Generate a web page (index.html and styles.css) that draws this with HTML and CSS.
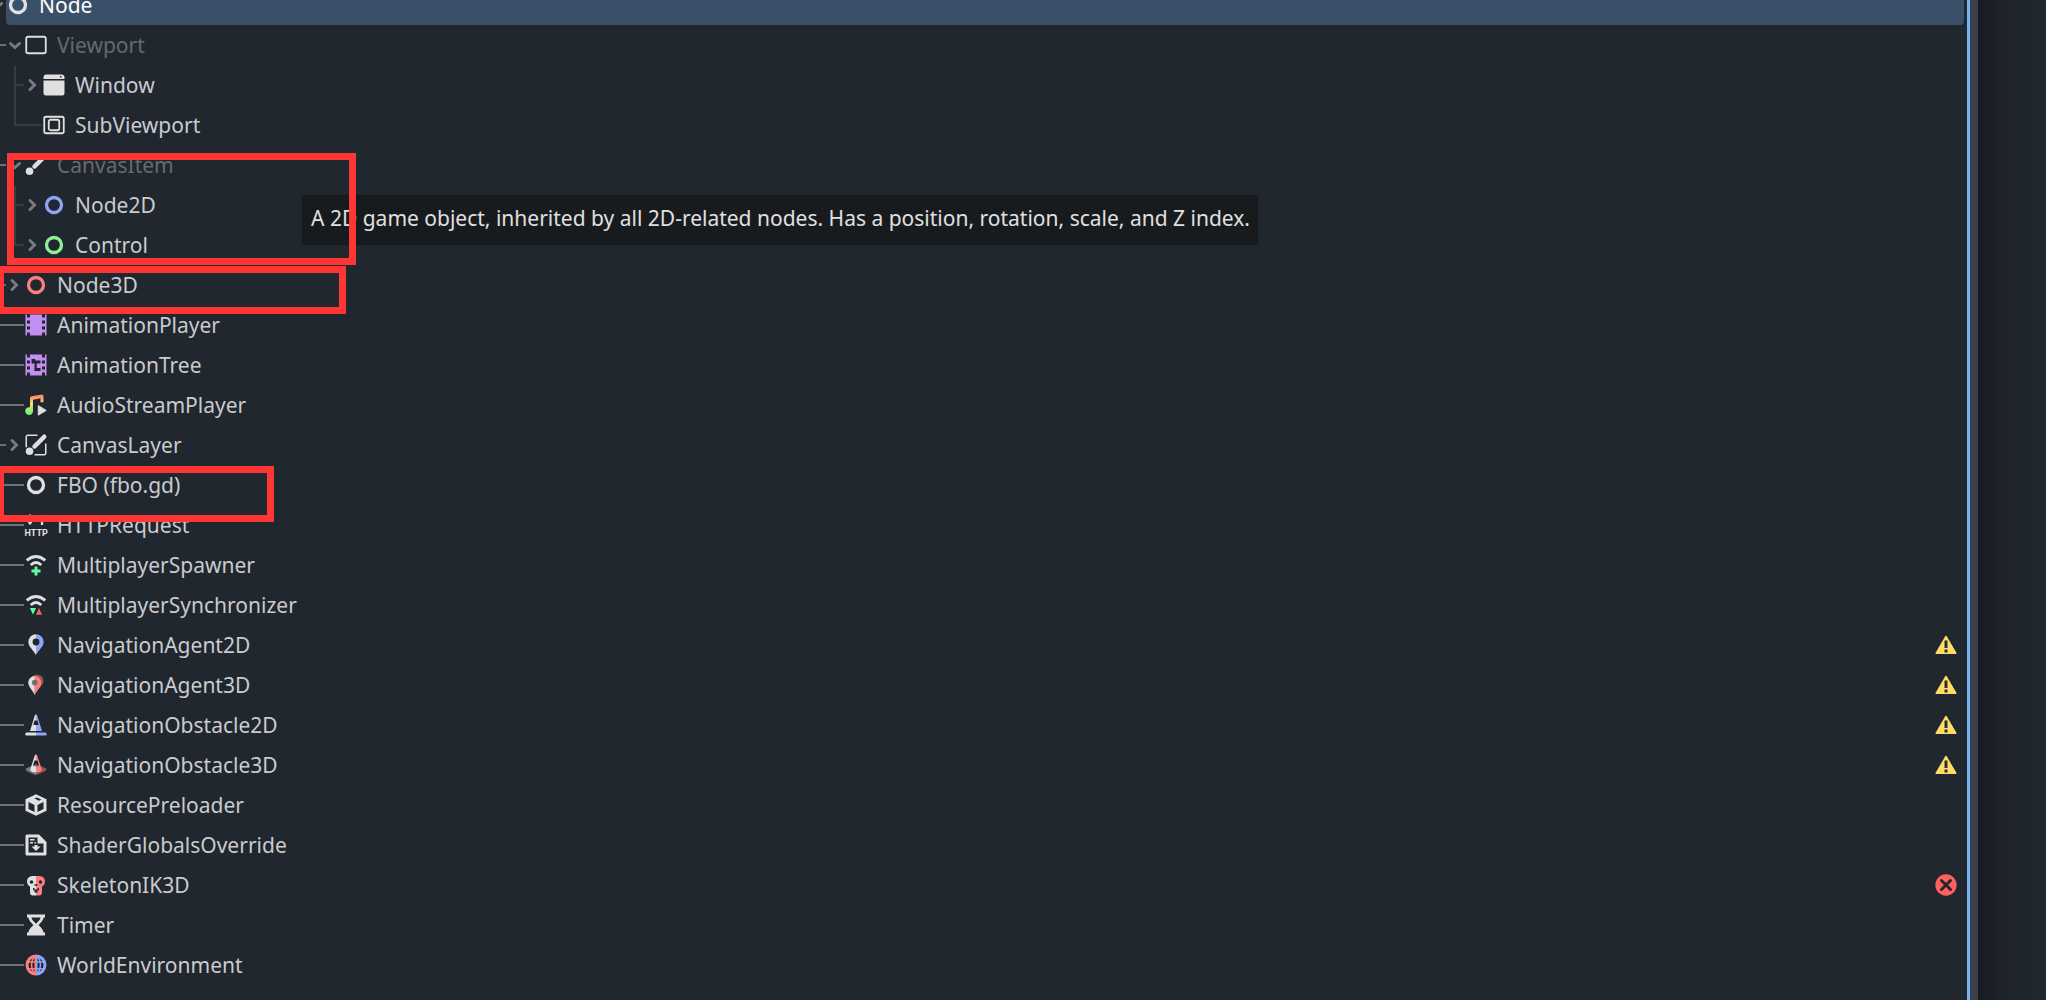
FILE: index.html
```html
<!DOCTYPE html>
<html lang="en">
<head>
  <meta charset="UTF-8">
  <meta name="viewport" content="width=device-width, initial-scale=1.0">
  <title>Create New Node</title>
  <link rel="stylesheet" href="styles.css">
</head>
<body>
  <svg class="sprite" aria-hidden="true">
    <defs>
      <linearGradient id="note" x1="0" y1="0" x2="0" y2="1">
        <stop offset="0" stop-color="#ff7a6b"/>
        <stop offset=".45" stop-color="#ffdc66"/>
        <stop offset=".9" stop-color="#6df77a"/>
      </linearGradient>
    </defs>
    <symbol id="down" viewBox="0 0 18 18"><path d="M4.500 7.500L9 11.500l4.500-4" fill="none" stroke="#777b81" stroke-width="3" stroke-linecap="round"/></symbol>
    <symbol id="right" viewBox="0 0 18 18"><path d="M6 4.500L10.500 9 6 13.500" fill="none" stroke="#777b81" stroke-width="3" stroke-linecap="round"/></symbol>
    <symbol id="ring" viewBox="0 0 16 16"><circle cx="8" cy="8" r="5" fill="none" stroke="currentColor" stroke-width="2.200"/></symbol>
    <symbol id="viewport" viewBox="0 0 16 16"><rect x="1.5" y="2.5" width="13" height="11" rx="1.2" fill="none" stroke="currentColor" stroke-width="1.200"/></symbol>
    <symbol id="window" viewBox="0 0 16 16" fill="currentColor">
      <path d="M3 1h10a2 2 0 0 1 2 2v1H1V3a2 2 0 0 1 2-2zm9 1v1h1V2zM1 5h14v8.5a1.5 1.5 0 0 1-1.5 1.5h-11A1.5 1.5 0 0 1 1 13.5z" fill-rule="evenodd"/>
    </symbol>
    <symbol id="subviewport" viewBox="0 0 16 16" fill="none" stroke="currentColor" stroke-width="1.200">
      <rect x="1.5" y="2.5" width="13" height="11" rx="1.2"/><rect x="4.5" y="4.5" width="7" height="7" rx="1.2"/>
    </symbol>
    <symbol id="brush" viewBox="0 0 16 16">
      <path d="M13.5 2.5L7 9" stroke="currentColor" stroke-width="3" stroke-linecap="round"/>
      <circle cx="3.7" cy="12.2" r="2.5" fill="currentColor"/>
    </symbol>
    <symbol id="layer" viewBox="0 0 16 16">
      <path d="M1.500 9.500v-7a1 1 0 0 1 1-1H9M14.500 7v6.500a1 1 0 0 1-1 1H7" fill="none" stroke="currentColor"/>
      <path d="M13.500 2.500L7 9" stroke="currentColor" stroke-width="3" stroke-linecap="round"/>
      <circle cx="3.700" cy="12.200" r="2.500" fill="currentColor"/>
    </symbol>
    <symbol id="film" viewBox="0 0 16 16">
      <path d="M1 1v14h1v-2h2v2h8v-2h2v2h1V1h-1v2h-2V1H4v2H2V1zm1 4h2v2H2zm10 0h2v2h-2zM2 9h2v2H2zm10 0h2v2h-2z" fill="#c38ef1" fill-rule="evenodd"/>
    </symbol>
    <symbol id="filmtree" viewBox="0 0 16 16">
      <path d="M1 1v14h1v-2h2v2h8v-2h2v2h1V1h-1v2h-2V1H4v2H2V1zm1 4h2v2H2zm10 0h2v2h-2zM2 9h2v2H2zm10 0h2v2h-2zM5 4h2.500v1H11v2H8.500v3H11v2H7V7H5z" fill="#c38ef1" fill-rule="evenodd"/>
    </symbol>
    <symbol id="audio" viewBox="0 0 16 16">
      <path d="M4 3.300Q4 2.500 5 2.200L12 1a1 1 0 0 1 1 1v4.200h-2V3.500L6 4.500V12a2.600 2.600 0 1 1-2-2.500z" fill="url(#note)"/>
      <path d="M9.500 8.300v6.500l5.300-3.200z" fill="#e0e0e0" stroke="#e0e0e0" stroke-linejoin="round" stroke-width=".6"/>
    </symbol>
    <symbol id="http" viewBox="0 0 16 16">
      <path d="M4 1v6.500M12 8V2" fill="none" stroke="#e0e0e0" stroke-width="1.500"/>
      <path d="M1.500 5h5L4 8zM9.500 4h5L12 1z" fill="#e0e0e0"/>
      <text x=".4" y="15" class="http-text">HTTP</text>
    </symbol>
    <symbol id="waves" viewBox="0 0 16 16">
      <path d="M1.800 4.900Q8-.3 14.200 4.900M4.500 8Q8 4.800 11.500 8" fill="none" stroke="#e0e0e0" stroke-width="1.900"/>
    </symbol>
    <symbol id="spawner" viewBox="0 0 16 16">
      <use href="#waves"/><path d="M7 9h2v2h2v2H9v2H7v-2H5v-2h2z" fill="#5fff97"/>
    </symbol>
    <symbol id="sync" viewBox="0 0 16 16">
      <use href="#waves"/><path d="M4 10h4l-2 4.500z" fill="#5fff97"/><path d="M8 14.500h4L10 10z" fill="#ff5f5f"/>
    </symbol>
    <symbol id="agent2d" viewBox="0 0 16 16">
      <path d="M8 .8A5.100 5.100 0 0 0 2.900 6c0 3 3 5 5.100 8.600V8.300a2.300 2.300 0 0 1 0-4.600z" fill="#e0e0e0"/>
      <path d="M8 .8A5.100 5.100 0 0 1 13.100 6c0 3-3 5-5.100 8.600V8.300a2.300 2.300 0 0 0 0-4.600z" fill="#8da5f3"/>
    </symbol>
    <symbol id="agent3d" viewBox="0 0 16 16">
      <path d="M5.500 2.500A4.300 4.300 0 0 1 13 5c0 3-3 5-5 8z" fill="#955355"/>
      <path d="M7.200 2A4.400 4.400 0 0 0 2.800 6.400c0 3 2.900 4.800 4.400 8.400z" fill="#e0e0e0"/>
      <path d="M7.200 2a4.400 4.400 0 0 1 4.400 4.400c0 3-2.900 4.800-4.400 8.400z" fill="#fc7f7f"/>
      <circle cx="7.200" cy="6.400" r="1.900" fill="#7b6a6c"/>
    </symbol>
    <symbol id="obstacle2d" viewBox="0 0 16 16">
      <path d="M8 1a.8.8 0 0 0-.8.600L4 12h4V8H6.200l.8-3h1zM1.800 13H8v2H1.800a1 1 0 0 1 0-2z" fill="#e0e0e0"/>
      <path d="M8 1a.8.8 0 0 1 .8.600L12 12H8V8h1.800L9 5H8zM14.200 13H8v2h6.200a1 1 0 0 0 0-2z" fill="#8da5f3"/>
    </symbol>
    <symbol id="obstacle3d" viewBox="0 0 16 16">
      <path d="M8 7.500L1.500 10.200q-1 .8 0 1.600L8 14.800z" fill="#77797c"/>
      <path d="M8 7.500l6.500 2.700q1 .8 0 1.600L8 14.800z" fill="#955355"/>
      <path d="M8 1a.8.800 0 0 0-.8.600L4 11.500Q5.500 13 8 13V9q-1.500 0-2-.7L7 5h1z" fill="#e0e0e0"/>
      <path d="M8 1a.8.800 0 0 1 .8.600L12 11.500Q10.500 13 8 13V9q1.500 0 2-.7L9 5H8z" fill="#fc7f7f"/>
    </symbol>
    <symbol id="cube" viewBox="0 0 16 16">
      <path d="M8 .8L1 4.200v7.600l7 3.400 7-3.400V4.200zM3 6l4 2v4.600l-4-2zm10 0v4.600l-4 2V8zM8.500 3l3 1.400-1.500.8-3-1.500z" fill="#e0e0e0" fill-rule="evenodd"/>
    </symbol>
    <symbol id="shader" viewBox="0 0 16 16">
      <path d="M2 1a1 1 0 0 0-1 1v12a1 1 0 0 0 1 1h12a1 1 0 0 0 1-1V6l-5-5zm1 2h6v4h4v6H3z" fill="#e0e0e0" fill-rule="evenodd"/>
      <path d="M4 4.500h3M4 6.500h2M7 6.500h1" stroke="#e0e0e0"/>
      <path d="M5 9h2V8h2v1h2l-3 3z" fill="#e0e0e0"/>
    </symbol>
    <symbol id="skull" viewBox="0 0 16 16">
      <path d="M8 2H5.500A3.500 3.500 0 0 0 2 5.500C2 7.500 3 8.500 4 9v4a2 2 0 0 0 2 2h2v-2H7v-1.500H6V10h1v1h1V8.500H7V7.500h1zM5 4.800a1.200 1.200 0 1 1 0 2.400 1.200 1.200 0 0 1 0-2.400z" fill="#e0e0e0" fill-rule="evenodd"/>
      <path d="M8 2h2.500A3.500 3.500 0 0 1 14 5.500c0 2-1 3-2 3.500v4a2 2 0 0 1-2 2H8v-2h1v-1.500h1V10H9v1H8V8.500h1V7.500H8zM11 4.800a1.200 1.200 0 1 0 0 2.400 1.200 1.200 0 0 0 0-2.400z" fill="#fc7f7f" fill-rule="evenodd"/>
    </symbol>
    <symbol id="timer" viewBox="0 0 16 16">
      <path d="M2 1v2h1c0 2 2 3.500 3.300 5C5 9.500 3 11 3 13H2v2h12v-2h-1c0-2-2-3.500-3.300-5C11 6.500 13 5 13 3h1V1zm3 2h6c0 1.500-1.500 2.500-3 4.200C6.500 5.500 5 4.500 5 3z" fill="#e0e0e0" fill-rule="evenodd"/>
    </symbol>
    <symbol id="globe" viewBox="0 0 16 16" fill="none">
      <path d="M8 2a6 6 0 0 0 0 12" stroke="#fc7f7f" stroke-width="2"/>
      <path d="M8 2a6 6 0 0 1 0 12" stroke="#8da5f3" stroke-width="2"/>
      <path d="M7 2Q3 8 7 14M2.500 6H7.500M2.500 10.500H7.500M7.500 2v12" stroke="#fc7f7f"/>
      <path d="M9 2q4 6 0 12M8.500 6h5M8.500 10.500h5M8.500 2v12" stroke="#8da5f3"/>
    </symbol>
    <symbol id="warning" viewBox="0 0 16 16">
      <path d="M8 2.300L1.500 13.500h13z" fill="#ffdd65" stroke="#ffdd65" stroke-linejoin="round"/>
      <path d="M7 5h2v5H7zM7 11h2v2H7z" fill="#2c2f31"/>
    </symbol>
    <symbol id="error" viewBox="0 0 16 16">
      <circle cx="8" cy="8" r="7.100" fill="#ff5f5f"/><path d="M5 5l6 6M11 5l-6 6" stroke="#21272e" stroke-width="2" stroke-linecap="round"/>
    </symbol>
  </svg>

  <main class="panel">
    <ul class="tree">
      <li class="row root"><button class="toggle" aria-label="Collapse Node"><svg><use href="#down"/></svg></button><span class="selected"><svg class="icon"><use href="#ring"/></svg><span class="name">Node</span></span></li>
      <li>
        <div class="row disabled"><i class="line"></i><button class="toggle" aria-label="Collapse Viewport"><svg><use href="#down"/></svg></button><svg class="icon"><use href="#viewport"/></svg><span class="name">Viewport</span></div>
        <ul class="children">
          <li class="row"><i class="line"></i><button class="toggle" aria-label="Expand Window"><svg><use href="#right"/></svg></button><svg class="icon"><use href="#window"/></svg><span class="name">Window</span></li>
          <li class="row"><i class="line leaf"></i><svg class="icon"><use href="#subviewport"/></svg><span class="name">SubViewport</span></li>
        </ul>
      </li>
      <li>
        <div class="row disabled"><i class="line"></i><button class="toggle" aria-label="Collapse CanvasItem"><svg><use href="#down"/></svg></button><svg class="icon"><use href="#brush"/></svg><span class="name">CanvasItem</span></div>
        <ul class="children">
          <li class="row"><i class="line"></i><button class="toggle" aria-label="Expand Node2D"><svg><use href="#right"/></svg></button><svg class="icon blue"><use href="#ring"/></svg><span class="name">Node2D</span></li>
          <li class="row"><i class="line"></i><button class="toggle" aria-label="Expand Control"><svg><use href="#right"/></svg></button><svg class="icon green"><use href="#ring"/></svg><span class="name">Control</span></li>
        </ul>
      </li>
      <li class="row"><i class="line"></i><button class="toggle" aria-label="Expand Node3D"><svg><use href="#right"/></svg></button><svg class="icon red"><use href="#ring"/></svg><span class="name">Node3D</span></li>
      <li class="row"><i class="line leaf"></i><svg class="icon"><use href="#film"/></svg><span class="name">AnimationPlayer</span></li>
      <li class="row"><i class="line leaf"></i><svg class="icon"><use href="#filmtree"/></svg><span class="name">AnimationTree</span></li>
      <li class="row"><i class="line leaf"></i><svg class="icon"><use href="#audio"/></svg><span class="name">AudioStreamPlayer</span></li>
      <li class="row"><i class="line"></i><button class="toggle" aria-label="Expand CanvasLayer"><svg><use href="#right"/></svg></button><svg class="icon"><use href="#layer"/></svg><span class="name">CanvasLayer</span></li>
      <li class="row"><i class="line leaf"></i><svg class="icon"><use href="#ring"/></svg><span class="name">FBO (fbo.gd)</span></li>
      <li class="row"><i class="line leaf"></i><svg class="icon"><use href="#http"/></svg><span class="name">HTTPRequest</span></li>
      <li class="row"><i class="line leaf"></i><svg class="icon"><use href="#spawner"/></svg><span class="name">MultiplayerSpawner</span></li>
      <li class="row"><i class="line leaf"></i><svg class="icon"><use href="#sync"/></svg><span class="name">MultiplayerSynchronizer</span></li>
      <li class="row"><i class="line leaf"></i><svg class="icon"><use href="#agent2d"/></svg><span class="name">NavigationAgent2D</span><svg class="icon"><use href="#warning"/></svg></li>
      <li class="row"><i class="line leaf"></i><svg class="icon"><use href="#agent3d"/></svg><span class="name">NavigationAgent3D</span><svg class="icon"><use href="#warning"/></svg></li>
      <li class="row"><i class="line leaf"></i><svg class="icon"><use href="#obstacle2d"/></svg><span class="name">NavigationObstacle2D</span><svg class="icon"><use href="#warning"/></svg></li>
      <li class="row"><i class="line leaf"></i><svg class="icon"><use href="#obstacle3d"/></svg><span class="name">NavigationObstacle3D</span><svg class="icon"><use href="#warning"/></svg></li>
      <li class="row"><i class="line leaf"></i><svg class="icon"><use href="#cube"/></svg><span class="name">ResourcePreloader</span></li>
      <li class="row"><i class="line leaf"></i><svg class="icon"><use href="#shader"/></svg><span class="name">ShaderGlobalsOverride</span></li>
      <li class="row"><i class="line leaf"></i><svg class="icon"><use href="#skull"/></svg><span class="name">SkeletonIK3D</span><svg class="icon"><use href="#error"/></svg></li>
      <li class="row"><i class="line leaf"></i><svg class="icon"><use href="#timer"/></svg><span class="name">Timer</span></li>
      <li class="row"><i class="line leaf"></i><svg class="icon"><use href="#globe"/></svg><span class="name">WorldEnvironment</span></li>
    </ul>
  </main>
  <aside class="side"></aside>

  <div class="tooltip" role="tooltip">A 2D game object, inherited by all 2D-related nodes. Has a position, rotation, scale, and Z index.</div>
  <div class="mark mark-canvas"></div>
  <div class="mark mark-node3d"></div>
  <div class="mark mark-fbo"></div>
</body>
</html>
```
FILE: styles.css
```css
body {
  background-color: #21272e;
  color: #c9cbcf;
  display: flex;
  font-family: "Noto Sans", sans-serif;
  font-size: 21px;
  line-height: 40px;
  margin: 0;
  min-height: 100vh;
  overflow: hidden;
  position: relative;
}

ul {
  list-style: none;
  margin: 0;
  padding: 0;
}

.sprite {
  height: 0;
  position: absolute;
  width: 0;
}

.panel {
  border-right: 3px solid #73b4f2;
  flex: 1;
}

/* the list is scrolled a little */
.tree {
  margin-top: -15px;
}

.row {
  align-items: center;
  display: flex;
  height: 40px;
  padding-right: 9px;
}

.root {
  margin-left: -12px;
  padding-right: 3px;
}

.selected {
  align-items: center;
  background-color: #3a5068;
  border-radius: 4px;
  color: #fff;
  display: flex;
  flex: 1;
}

.name {
  flex: 1;
  padding-left: 9px;
  white-space: nowrap;
}

.disabled .name {
  color: #666a70;
}

.line {
  background-color: #6d7178;
  flex: none;
  height: 2px;
  width: 6px;
}

.leaf {
  width: 24px;
}

/* vertical guide stops at the middle of the last child */
.children {
  background: linear-gradient(#373b42, #373b42) no-repeat 14px 1px / 2px calc(100% - 20px);
  padding-left: 16px;
}

.children .line {
  background-color: #373b42;
  width: 8px;
}

.children .leaf {
  width: 26px;
}

.toggle {
  background: none;
  border: 0;
  flex: none;
  height: 18px;
  padding: 0;
  width: 18px;
}

.toggle svg {
  display: block;
  height: 18px;
  width: 18px;
}

.icon {
  color: #e0e0e0;
  flex: none;
  height: 24px;
  width: 24px;
}

.blue {
  color: #8da5f3;
}

.green {
  color: #8eef97;
}

.red {
  color: #fc7f7f;
}

.http-text {
  fill: #e0e0e0;
  font: bold 6px Roboto, sans-serif;
}

.side {
  background: linear-gradient(to right, #181b20, #1f242b 30px, #21272e);
  border-left: 8px solid #3b3f4b;
  flex: none;
  width: 68px;
}

.tooltip {
  background-color: #181b1e;
  border-radius: 2px;
  color: #e0e0e0;
  left: 302px;
  line-height: 28px;
  padding: 9px 8px 13px 9px;
  position: absolute;
  top: 195px;
  white-space: nowrap;
}

.mark {
  border: 7px solid #fe3735;
  box-sizing: border-box;
  position: absolute;
}

.mark-canvas {
  height: 112px;
  left: 7px;
  top: 153px;
  width: 349px;
}

.mark-node3d {
  height: 48px;
  left: -3px;
  top: 266px;
  width: 349px;
}

.mark-fbo {
  height: 56px;
  left: -3px;
  top: 466px;
  width: 277px;
}
```
